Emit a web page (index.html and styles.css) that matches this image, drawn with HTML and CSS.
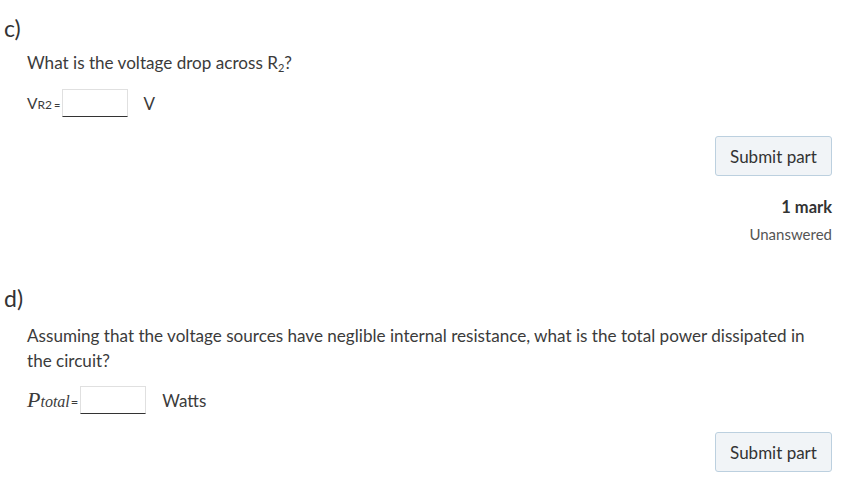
FILE: index.html
```html
<!DOCTYPE html>
<html>
<head>
<meta charset="utf-8">
<link rel="stylesheet" href="styles.css">
</head>
<body>
<section class="part">
  <h2 class="part-label">c)</h2>
  <div class="part-body">
    <p class="prompt">What is the voltage drop across R<sub>2</sub>?</p>
    <div class="answer-row">
      <span class="var">V<sub class="sub-sans">R2</sub><span class="eq">=</span></span>
      <span class="answer-box"></span>
      <span class="unit">V</span>
    </div>
  </div>
  <div class="submit-area">
    <button class="submit">Submit part</button>
    <div class="marks">1 mark</div>
    <div class="status">Unanswered</div>
  </div>
</section>
<section class="part part-d">
  <h2 class="part-label">d)</h2>
  <div class="part-body">
    <p class="prompt">Assuming that the voltage sources have neglible internal resistance, what is the total power dissipated in the circuit?</p>
    <div class="answer-row row-d">
      <span class="var math"><i>P</i><sub class="sub-math">total</sub><span class="eq">=</span></span>
      <span class="answer-box"></span>
      <span class="unit unit-d">Watts</span>
    </div>
  </div>
  <div class="submit-area">
    <button class="submit">Submit part</button>
  </div>
</section>
</body>
</html>
```
FILE: styles.css
```css
html, body {
  margin: 0;
  padding: 0;
  background: #fff;
}
body {
  font-family: "Lato", "Liberation Sans", sans-serif;
  font-size: 17px;
  color: #3b3b3b;
  width: 842px;
}
.part {
  padding: 0 10px 0 4px;
}
.part-label {
  margin: 0;
  padding-top: 13px;
  font-size: 23px;
  font-weight: 400;
  line-height: 30px;
  color: #333;
}
.part-body {
  padding-left: 23px;
}
.prompt {
  margin: 7px 0 0;
  line-height: 25px;
  font-size: 17.1px;
  max-width: 800px;
}
.prompt sub {
  font-size: 11px;
  vertical-align: -3px;
  line-height: 0;
}
.answer-row {
  display: flex;
  align-items: center;
  margin-top: 14px;
  height: 28px;
}
.var {
  font-size: 15.5px;
  display: inline-flex;
  align-items: baseline;
}
.sub-sans {
  font-size: 12px;
  vertical-align: -3px;
  line-height: 0;
}
.eq {
  font-size: 11px;
  margin-left: 2px;
}
.answer-box {
  display: inline-block;
  width: 64px;
  height: 26px;
  border: 1px solid #e0e0e0;
  border-bottom: 1px solid #333;
  margin-left: 2px;
}
.unit {
  margin-left: 15px;
  font-size: 17px;
}
.submit-area {
  display: flex;
  flex-direction: column;
  align-items: flex-end;
}
.submit {
  font-family: inherit;
  font-size: 17px;
  color: #333;
  background: #f1f4f7;
  border: 1px solid #bcd0df;
  border-radius: 3px;
  width: 117px;
  height: 40px;
  padding: 0;
  margin-top: 19px;
}
.marks {
  font-weight: 700;
  font-size: 16.5px;
  margin-top: 21px;
  line-height: 20px;
  color: #333;
}
.status {
  font-size: 15px;
  margin-top: 7px;
  line-height: 20px;
  color: #555;
}
.part-d .part-label {
  padding-top: 39px;
}
.part-d .prompt {
  margin-top: 10px;
}
.math {
  font-family: "Liberation Serif", serif;
  font-size: 22px;
}
.sub-math {
  font-size: 16px;
  font-style: italic;
  vertical-align: -4px;
  line-height: 0;
}
.math .eq {
  font-family: "Lato", sans-serif;
  font-size: 13px;
  margin-left: 1px;
}
.row-d {
  margin-top: 13px;
}
.unit-d {
  margin-left: 16px;
}
.part-d .submit {
  margin-top: 18px;
}
```
